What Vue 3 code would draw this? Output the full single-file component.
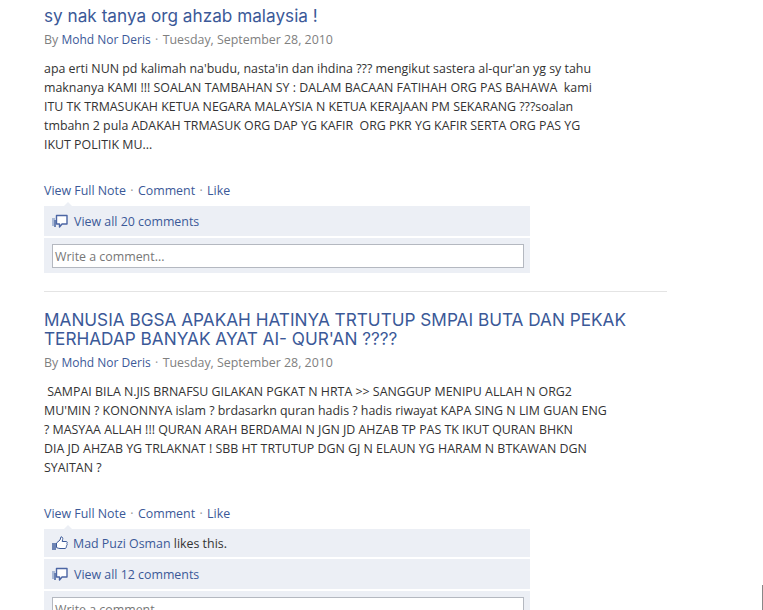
<template>
  <div class="page">
    <div class="feed">
      <article v-for="(note, i) in notes" :key="i" class="note">
        <h2 class="title">{{ note.title }}</h2>
        <div class="meta">
          By <a href="#">Mohd Nor Deris</a><span class="dot">·</span>{{ note.date }}
        </div>
        <div class="body">
          <div v-for="(line, j) in note.lines" :key="j" class="line">{{ line }}</div>
        </div>
        <div class="actions">
          <a href="#">View Full Note</a><span class="dot">·</span><a href="#">Comment</a><span class="dot">·</span><a href="#">Like</a>
        </div>
        <div class="ufi">
          <div v-if="note.liker" class="row likes">
            <svg class="like-icon" width="16" height="15" viewBox="0 0 16 15">
              <path d="M0 7h4v7H0z" fill="#6d84b4" />
              <path d="M4.500 7 8 4 9 .8c1.500 0 2.100 1.300 1.600 2.800L10.200 5.500h4c1.100 0 1.300 1.200.6 1.800.6.600.5 1.500-.1 1.900.3.600.1 1.300-.5 1.600.2.900-.4 1.700-1.200 1.700H8c-1.400 0-2.200-.5-3.500-.9z" fill="#fff" stroke="#3b5998" />
            </svg>
            <a href="#">{{ note.liker }}</a>&nbsp;<span class="likes-text">likes this.</span>
          </div>
          <div class="row comments">
            <svg class="comment-icon" width="16" height="15" viewBox="0 0 16 15">
              <path d="M0 4h3v8H0z" fill="#a9b9d6" />
              <path d="M2 6h2v7H2z" fill="#6d84b4" />
              <path d="M4.500 1.500h10.500v8.500H10l-2.500 3V10h-3z" fill="#fff" stroke="#4c66a4" stroke-width="1.400" stroke-linejoin="round" />
            </svg>
            <a href="#">View all {{ note.count }} comments</a>
          </div>
          <div class="row write">
            <div class="input">Write a comment...</div>
          </div>
        </div>
      </article>
    </div>
    <div class="edge"></div>
  </div>
</template>

<script setup>
const notes = [
  {
    title: 'sy nak tanya org ahzab malaysia !',
    date: 'Tuesday, September 28, 2010',
    lines: [
      "apa erti NUN pd kalimah na'budu, nasta'in dan ihdina ??? mengikut sastera al-qur'an yg sy tahu",
      'maknanya KAMI !!! SOALAN TAMBAHAN SY : DALAM BACAAN FATIHAH ORG PAS BAHAWA  kami',
      'ITU TK TRMASUKAH KETUA NEGARA MALAYSIA N KETUA KERAJAAN PM SEKARANG ???soalan',
      'tmbahn 2 pula ADAKAH TRMASUK ORG DAP YG KAFIR  ORG PKR YG KAFIR SERTA ORG PAS YG',
      'IKUT POLITIK MU...',
    ],
    count: 20,
  },
  {
    title: "MANUSIA BGSA APAKAH HATINYA TRTUTUP SMPAI BUTA DAN PEKAK TERHADAP BANYAK AYAT AI- QUR'AN ????",
    date: 'Tuesday, September 28, 2010',
    lines: [
      ' SAMPAI BILA N.JIS BRNAFSU GILAKAN PGKAT N HRTA >> SANGGUP MENIPU ALLAH N ORG2',
      "MU'MIN ? KONONNYA islam ? brdasarkn quran hadis ? hadis riwayat KAPA SING N LIM GUAN ENG",
      '? MASYAA ALLAH !!! QURAN ARAH BERDAMAI N JGN JD AHZAB TP PAS TK IKUT QURAN BHKN',
      'DIA JD AHZAB YG TRLAKNAT ! SBB HT TRTUTUP DGN GJ N ELAUN YG HARAM N BTKAWAN DGN',
      'SYAITAN ?',
    ],
    liker: 'Mad Puzi Osman',
    count: 12,
  },
]
</script>

<style>
html,
body {
  margin: 0;
  background: #fff;
  overflow: hidden;
}
</style>

<style scoped>
.page {
  position: relative;
  width: 763px;
  height: 610px;
  overflow: hidden;
  font-family: "Open Sans", "DejaVu Sans", sans-serif;
  font-size: 12.4px;
  color: #333;
}

.feed {
  width: 623px;
  margin-left: 44px;
  padding-top: 6px;
}

.note + .note {
  border-top: 1px solid #e4e4e4;
  margin-top: 18px;
  padding-top: 18px;
}

a {
  color: #3b5998;
  text-decoration: none;
}

.title {
  margin: 0;
  font-family: Inter, "DejaVu Sans", sans-serif;
  font-size: 17.2px;
  line-height: 19px;
  font-weight: 400;
  color: #3b5998;
}

.meta {
  margin-top: 5px;
  line-height: 20px;
  color: #808080;
}

.meta a {
  font-size: 12px;
}

.dot {
  display: inline-block;
  width: 12px;
  text-align: center;
  color: #999;
}

.body {
  margin-top: 9px;
  width: 580px;
}

.line {
  height: 19px;
  line-height: 19px;
  white-space: pre;
}

.actions {
  margin-top: 27px;
  line-height: 20px;
}

.ufi {
  position: relative;
  margin-top: 5px;
  width: 486px;
  display: flex;
  flex-direction: column;
  gap: 2px;
}

.ufi::before {
  content: "";
  position: absolute;
  left: 20px;
  top: -4px;
  border-left: 4px solid transparent;
  border-right: 4px solid transparent;
  border-bottom: 4px solid #eceff5;
}

.row {
  background: #eceff5;
  display: flex;
  align-items: center;
  padding-left: 8px;
}

.likes {
  height: 28px;
  padding-top: 1px;
  box-sizing: border-box;
}

.comments {
  height: 30px;
}

.write {
  height: 35px;
  align-items: flex-start;
  padding-top: 6px;
  box-sizing: border-box;
}

.like-icon {
  margin-right: 5px;
}

.comment-icon {
  margin-right: 6px;
}

.input {
  width: 468px;
  height: 22px;
  border: 1px solid #b4b8c0;
  background: #fff;
  color: #777;
  line-height: 24px;
  padding-left: 2px;
}

.edge {
  position: absolute;
  right: 0;
  top: 585px;
  width: 1px;
  height: 25px;
  background: #888;
}
</style>
